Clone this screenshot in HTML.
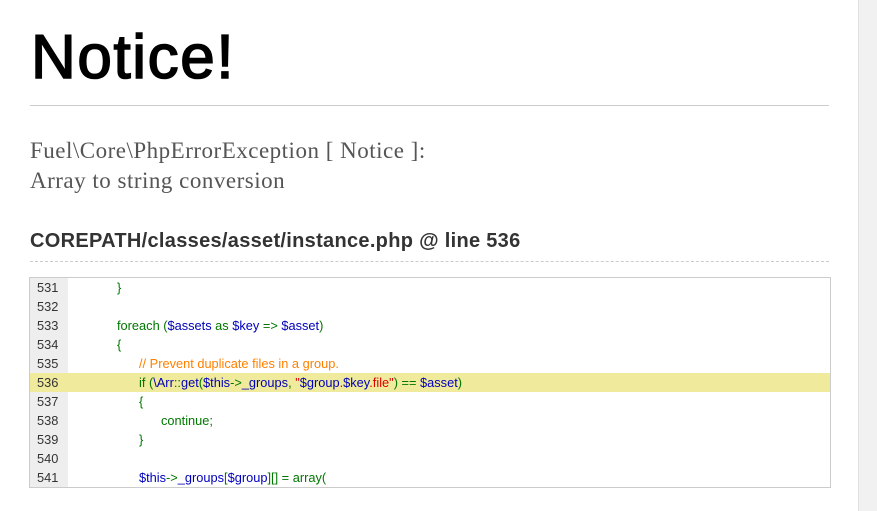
<!DOCTYPE html>
<html><head><meta charset="utf-8"><style>
html,body{margin:0;padding:0;background:#fff;width:877px;height:511px;overflow:hidden;position:relative}
.sb{position:absolute;left:858px;top:0;width:19px;height:511px;background:#f1f1f1;border-left:1px solid #e0e0e0}
.wrap{position:absolute;left:30px;top:0;width:799px}
h1{font-family:"Liberation Sans",sans-serif;font-size:62px;font-weight:normal;margin:0;position:absolute;top:22px;left:1px;color:#000;-webkit-text-stroke:1.6px #000;letter-spacing:1.6px}
.hr{position:absolute;top:105px;left:0;width:799px;height:1px;background:#ccc}
.msg{position:absolute;top:136px;left:0;font-family:"Liberation Serif",serif;font-size:23px;line-height:30px;color:#555;letter-spacing:0.5px}
h2{position:absolute;top:230px;left:0;margin:0;font-family:"Liberation Sans",sans-serif;font-size:20px;font-weight:bold;color:#333;letter-spacing:0.3px}
.dash{position:absolute;top:261px;left:0;width:799px;border-top:1px dashed #ccc}
.code{position:absolute;top:277px;left:-1px;width:800px;height:209px;border:1px solid #ccc;font-family:"Liberation Sans",sans-serif;font-size:12.8px;overflow:hidden}
.row{height:19px;line-height:19px;position:relative;white-space:pre}
.row .n{position:absolute;left:0;top:0;width:38px;height:19px;background:#eee;color:#333;padding-left:7px;box-sizing:border-box}
.row .c{position:absolute;left:87px;color:#007700}
.hl{background:#f0ea9c}.hl .n{background:#f0ea9c}
.v{color:#0000bb}.o{color:#ff8000}.s{color:#dd0000}
</style></head><body>
<div class="sb"></div>
<div class="wrap">
<h1>Notice!</h1>
<div class="hr"></div>
<div class="msg">Fuel\Core\PhpErrorException [ Notice ]:<br>Array to string conversion</div>
<h2>COREPATH/classes/asset/instance.php @ line 536</h2>
<div class="dash"></div>
<div class="code">
<div class="row"><span class="n">531</span><span class="c">}</span></div>
<div class="row"><span class="n">532</span></div>
<div class="row"><span class="n">533</span><span class="c">foreach (<span class="v">$assets</span> as <span class="v">$key</span> =&gt; <span class="v">$asset</span>)</span></div>
<div class="row"><span class="n">534</span><span class="c">{</span></div>
<div class="row"><span class="n">535</span><span class="c" style="left:109px"><span class="o">// Prevent duplicate files in a group.</span></span></div>
<div class="row hl"><span class="n">536</span><span class="c" style="left:109px">if (<span class="v">\Arr</span>::<span class="v">get</span>(<span class="v">$this</span>-&gt;<span class="v">_groups</span>, <span class="s">"</span><span class="v">$group</span><span class="s">.</span><span class="v">$key</span><span class="s">.file"</span>) == <span class="v">$asset</span>)</span></div>
<div class="row"><span class="n">537</span><span class="c" style="left:109px">{</span></div>
<div class="row"><span class="n">538</span><span class="c" style="left:131px">continue;</span></div>
<div class="row"><span class="n">539</span><span class="c" style="left:109px">}</span></div>
<div class="row"><span class="n">540</span></div>
<div class="row"><span class="n">541</span><span class="c" style="left:109px"><span class="v">$this</span>-&gt;<span class="v">_groups</span>[<span class="v">$group</span>][] = array(</span></div>
</div>
</div>
</body></html>
